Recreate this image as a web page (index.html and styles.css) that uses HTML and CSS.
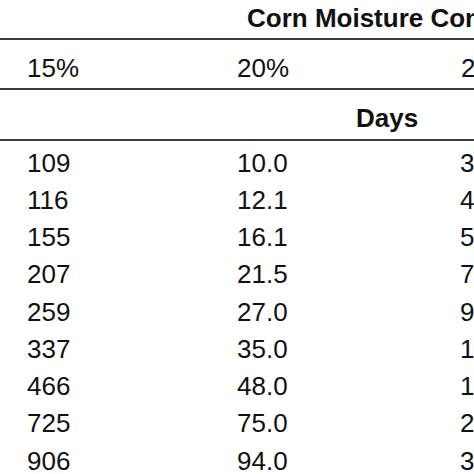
FILE: index.html
```html
<!DOCTYPE html>
<html lang="en">
<head>
<meta charset="utf-8">
<title>Corn Moisture Content</title>
<link rel="stylesheet" href="styles.css">
</head>
<body>
<div class="table">
  <div class="row title-row">
    <div class="span title">Corn Moisture Content</div>
  </div>
  <div class="row head-row">
    <div>15%</div>
    <div>20%</div>
    <div class="shift">25%</div>
  </div>
  <div class="row unit-row">
    <div class="span unit">Days</div>
  </div>
  <div class="data">
    <div class="row"><div>109</div><div>10.0</div><div>36.0</div></div>
    <div class="row"><div>116</div><div>12.1</div><div>43.0</div></div>
    <div class="row"><div>155</div><div>16.1</div><div>57.0</div></div>
    <div class="row"><div>207</div><div>21.5</div><div>76.0</div></div>
    <div class="row"><div>259</div><div>27.0</div><div>95.0</div></div>
    <div class="row"><div>337</div><div>35.0</div><div>124</div></div>
    <div class="row"><div>466</div><div>48.0</div><div>171</div></div>
    <div class="row"><div>725</div><div>75.0</div><div>266</div></div>
    <div class="row"><div>906</div><div>94.0</div><div>333</div></div>
  </div>
</div>
</body>
</html>
```
FILE: styles.css
```css
html, body {
  margin: 0;
  padding: 0;
  background: #ffffff;
  overflow: hidden;
}

body {
  width: 474px;
  height: 474px;
  font-family: "Liberation Sans", Arial, Helvetica, sans-serif;
  font-size: 26px;
  line-height: 26px;
  color: #111111;
}

.table {
  width: 780px;
}

.row {
  display: grid;
  grid-template-columns: 210px 223px 1fr;
  padding-left: 27px;
  white-space: nowrap;
}

.span {
  grid-column: 2 / 4;
}

.title-row {
  padding-top: 5px;
  padding-bottom: 7px;
  border-bottom: 2px solid #3c3c3c;
}

.title {
  font-weight: bold;
  padding-left: 10px;
}

.head-row {
  padding-top: 14.5px;
  padding-bottom: 7.5px;
  border-bottom: 2px solid #3c3c3c;
}

.shift {
  padding-left: 1px;
}

.unit-row {
  padding-top: 14.5px;
  padding-bottom: 8.5px;
  border-bottom: 2px solid #3c3c3c;
}

.unit {
  font-weight: bold;
  padding-left: 119px;
}

.data {
  display: flex;
  flex-direction: column;
  gap: 11.25px;
  padding-top: 8.5px;
}
```
